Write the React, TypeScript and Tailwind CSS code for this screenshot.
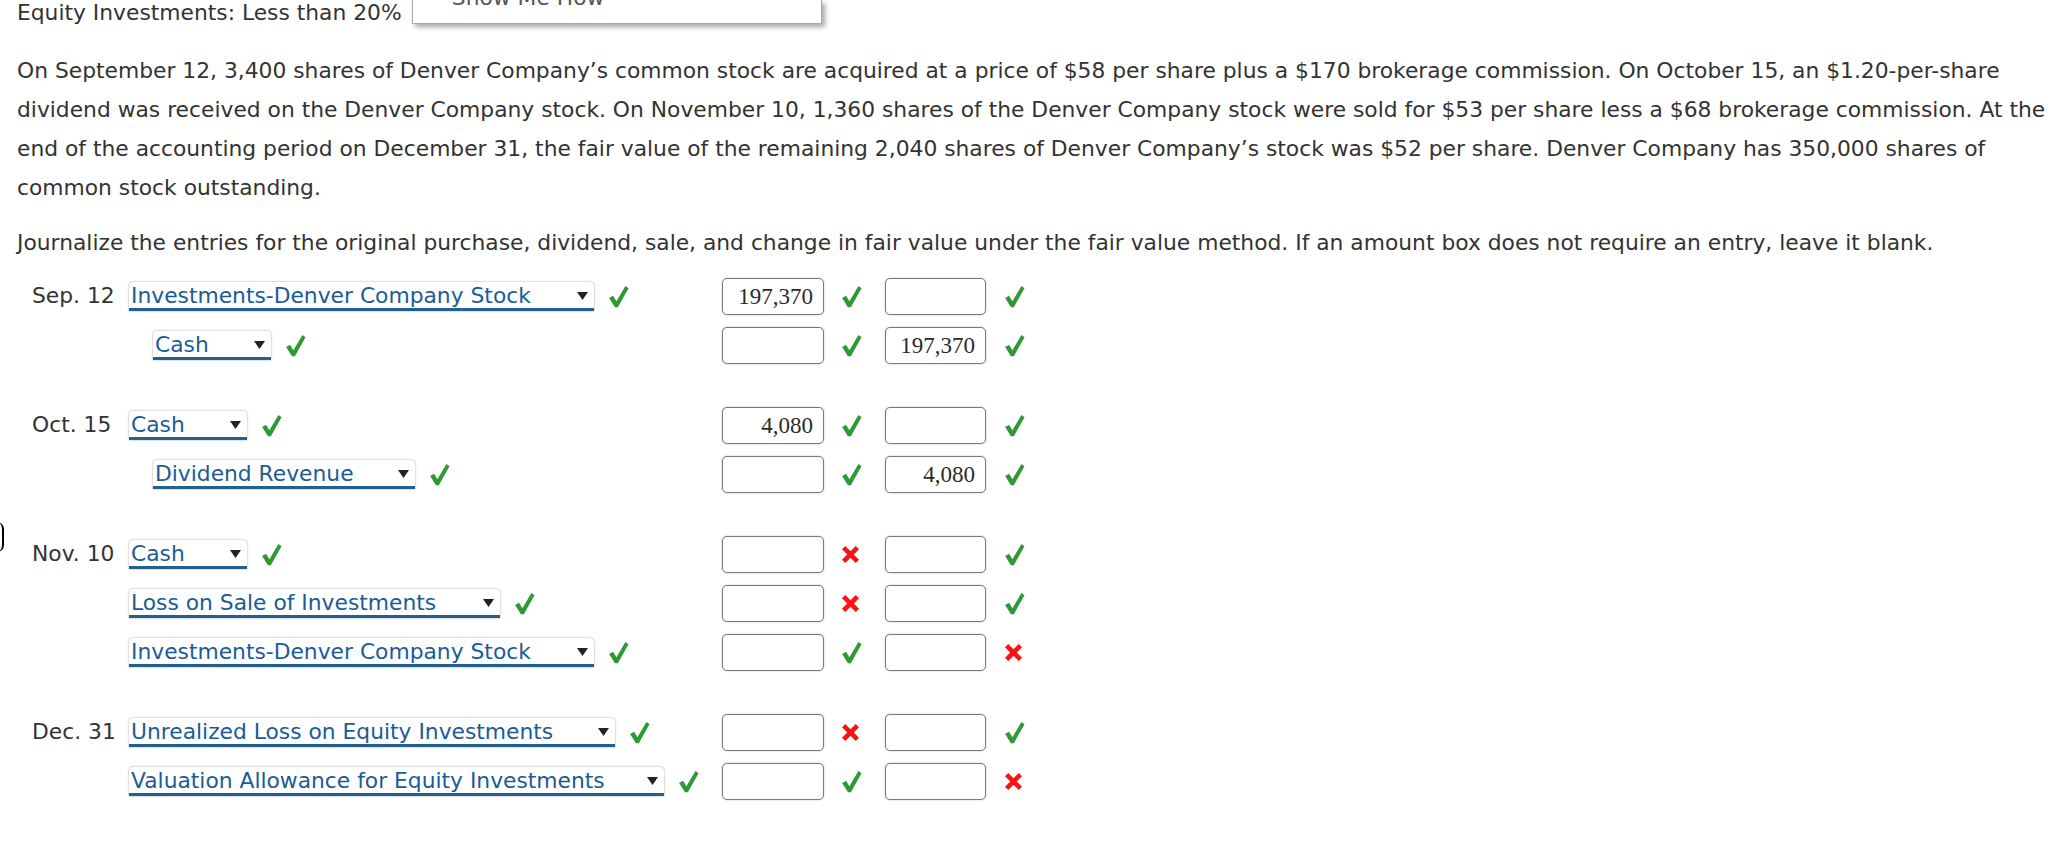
import React from 'react';

type Mark = 'ok' | 'x';

interface Row {
  date?: string;
  account: string;
  width: number;
  indent?: boolean;
  debit: string;
  debitMark: Mark;
  credit: string;
  creditMark: Mark;
}

const groups: Row[][] = [
  [
    { date: 'Sep. 12', account: 'Investments-Denver Company Stock', width: 465, debit: '197,370', debitMark: 'ok', credit: '', creditMark: 'ok' },
    { account: 'Cash', width: 118, indent: true, debit: '', debitMark: 'ok', credit: '197,370', creditMark: 'ok' },
  ],
  [
    { date: 'Oct. 15', account: 'Cash', width: 118, debit: '4,080', debitMark: 'ok', credit: '', creditMark: 'ok' },
    { account: 'Dividend Revenue', width: 262, indent: true, debit: '', debitMark: 'ok', credit: '4,080', creditMark: 'ok' },
  ],
  [
    { date: 'Nov. 10', account: 'Cash', width: 118, debit: '', debitMark: 'x', credit: '', creditMark: 'ok' },
    { account: 'Loss on Sale of Investments', width: 371, debit: '', debitMark: 'x', credit: '', creditMark: 'ok' },
    { account: 'Investments-Denver Company Stock', width: 465, debit: '', debitMark: 'ok', credit: '', creditMark: 'x' },
  ],
  [
    { date: 'Dec. 31', account: 'Unrealized Loss on Equity Investments', width: 486, debit: '', debitMark: 'x', credit: '', creditMark: 'ok' },
    { account: 'Valuation Allowance for Equity Investments', width: 535, debit: '', debitMark: 'ok', credit: '', creditMark: 'x' },
  ],
];

const Check = () => (
  <svg width="21" height="23" viewBox="0 0 20 22" className="block">
    <path d="M1 12.5 L4.8 10.2 L8 15.6 L16.6 1 L19.6 3 L9.4 21.2 L6.6 21.2 Z" fill="#2f9a35" />
  </svg>
);

const Cross = () => (
  <svg width="19" height="19" viewBox="0 0 18 18" className="block">
    <path d="M2.5 2.5 L15.5 15.5 M15.5 2.5 L2.5 15.5" stroke="#ff1111" strokeWidth="4.4" />
  </svg>
);

const MarkIcon = ({ mark }: { mark: Mark }) => (mark === 'ok' ? <Check /> : <Cross />);

const AccountSelect = ({ label, width }: { label: string; width: number }) => (
  <div
    className="flex h-[29px] items-end justify-between rounded-t-[4px] border-b-[3px] border-[#24608f] bg-white pl-[2px] pr-[6px] shadow-[0_0_2px_rgba(0,0,0,0.45)]"
    style={{ width }}
  >
    <span className="text-[21.8px] leading-[25px] text-[#1b5c96] whitespace-nowrap">{label}</span>
    <svg width="11" height="8" viewBox="0 0 11 8" className="mb-[8px] block shrink-0">
      <polygon points="0,0 11,0 5.5,8" fill="#222" />
    </svg>
  </div>
);

const AmountBox = ({ value, width }: { value: string; width: number }) => (
  <div
    className="flex h-[37px] items-center justify-end rounded-[5px] border border-[#7a7a7a] bg-white pr-[10px] shadow-[0_0_2px_rgba(0,0,0,0.25)]"
    style={{ width }}
  >
    <span className="text-[23px] leading-none text-[#2b2b2b]" style={{ fontFamily: '"Liberation Serif", serif' }}>
      {value}
    </span>
  </div>
);

const JournalRow = ({ row }: { row: Row }) => (
  <div className="flex h-[37px] items-center pl-[15px]">
    <div className="w-[97px] text-[21.8px] text-[#333]">{row.date}</div>
    <div className="flex w-[593px] items-center">
      <div className={row.indent ? 'ml-[24px]' : ''}>
        <AccountSelect label={row.account} width={row.width} />
      </div>
      <div className="ml-[14px]">
        <Check />
      </div>
    </div>
    <AmountBox value={row.debit} width={102} />
    <div className="w-[61px] pl-[17px]">
      <MarkIcon mark={row.debitMark} />
    </div>
    <AmountBox value={row.credit} width={101} />
    <div className="pl-[18px]">
      <MarkIcon mark={row.creditMark} />
    </div>
  </div>
);

export default function App() {
  return (
    <div
      className="relative min-h-[842px] w-[2062px] overflow-hidden bg-white pl-[17px] pr-[10px] text-[#333]"
      style={{ fontFamily: '"DejaVu Sans", Verdana, sans-serif' }}
    >
      {/* Show Me How popup, scrolled mostly out of view */}
      <div className="absolute left-[412px] top-0 h-[24px] w-[410px] overflow-hidden border border-t-0 border-[#a8a8a8] bg-white shadow-[3px_3px_5px_rgba(0,0,0,0.35)]">
        <div className="-mt-[15px] flex items-center pl-[8px] text-[21.8px] leading-[26px] text-[#555]">
          <span className="mr-[18px]">•</span>
          <span>Show Me How</span>
        </div>
      </div>

      {/* stray bracket at left edge */}
      <div className="absolute -left-[10px] top-[522px] h-[30px] w-[14px] rounded-full border-r-2 border-black" />

      <div className="h-[26px] text-[21.8px] leading-[26px]">Equity Investments: Less than 20%</div>

      <p className="mt-[25px] text-[21.8px] leading-[39px]">
        On September 12, 3,400 shares of Denver Company’s common stock are acquired at a price of $58 per share plus a $170
        brokerage commission. On October 15, an $1.20-per-share dividend was received on the Denver Company stock. On November
        10, 1,360 shares of the Denver Company stock were sold for $53 per share less a $68 brokerage commission. At the end of
        the accounting period on December 31, the fair value of the remaining 2,040 shares of Denver Company’s stock was $52 per
        share. Denver Company has 350,000 shares of common stock outstanding.
      </p>

      <p className="mt-[16px] text-[21.8px] leading-[39px]">
        Journalize the entries for the original purchase, dividend, sale, and change in fair value under the fair value method. If
        an amount box does not require an entry, leave it blank.
      </p>

      <div className="mt-[16px]">
        {groups.map((g, gi) => (
          <div key={gi} className={gi === 0 ? '' : 'mt-[43px]'}>
            {g.map((r, ri) => (
              <div key={ri} className={ri === 0 ? '' : 'mt-[12px]'}>
                <JournalRow row={r} />
              </div>
            ))}
          </div>
        ))}
      </div>
    </div>
  );
}
